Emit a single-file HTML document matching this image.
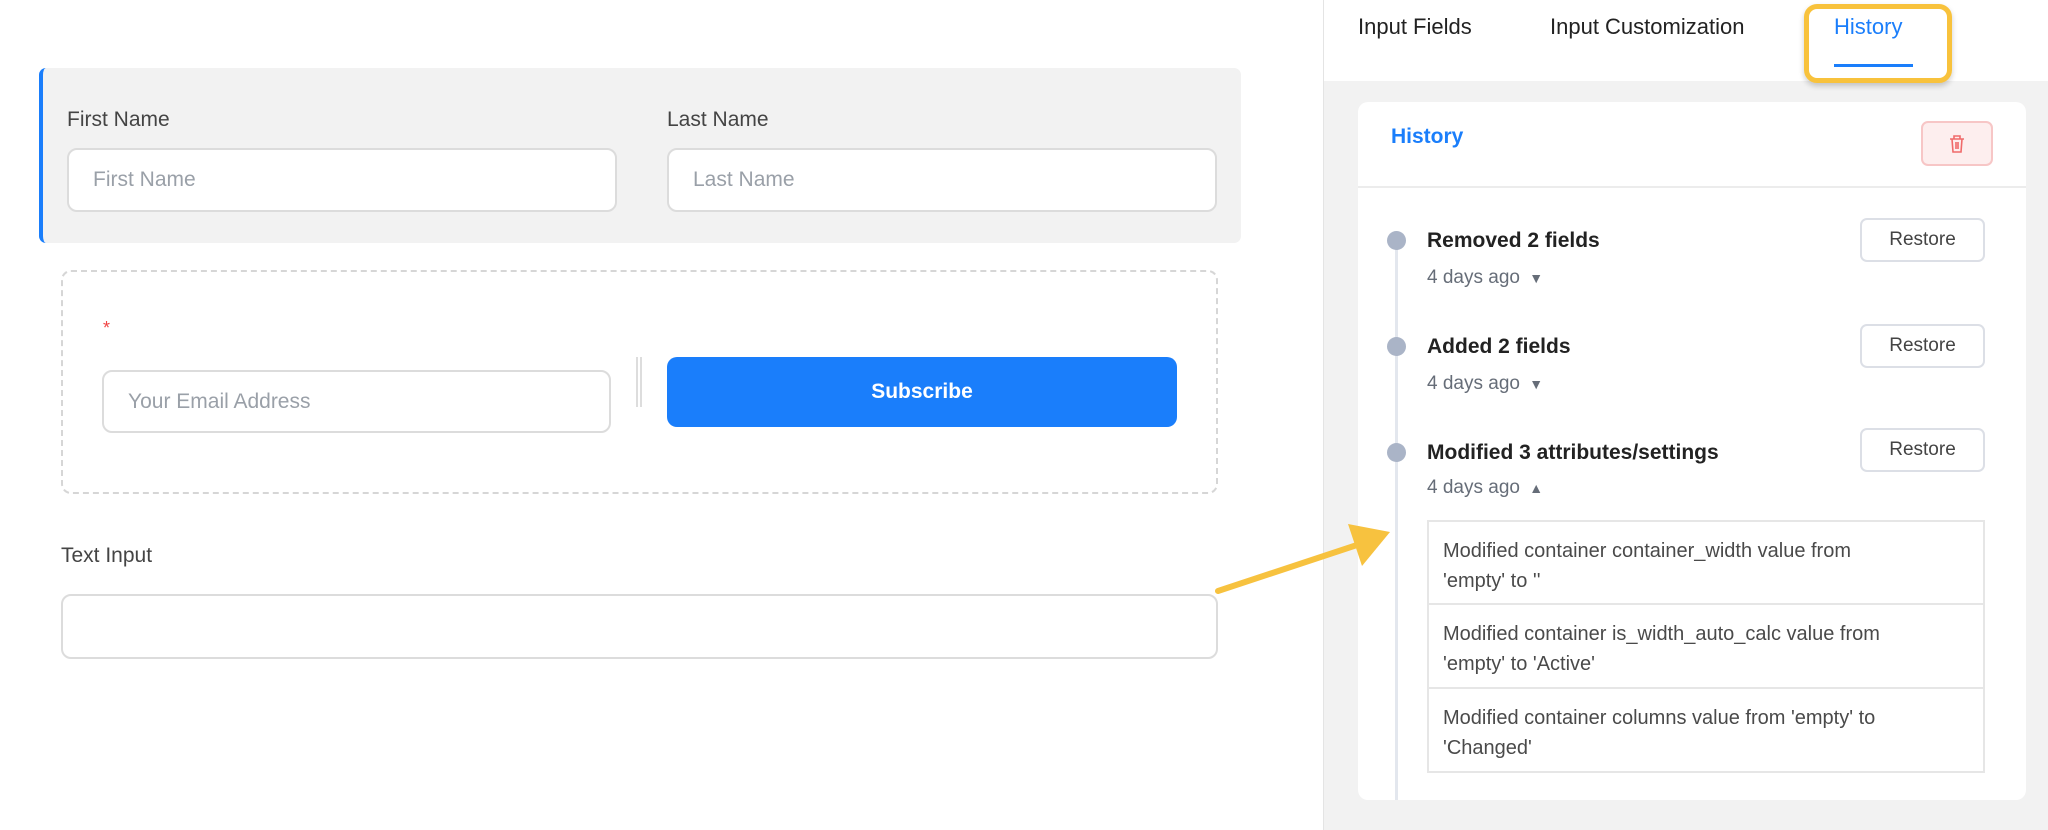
<!DOCTYPE html>
<html><head><meta charset="utf-8"><style>
*{box-sizing:border-box;margin:0;padding:0}
body{width:2048px;height:830px;overflow:hidden;background:#fff;font-family:"Liberation Sans",sans-serif;position:relative}
.a{position:absolute}
.inp{position:absolute;background:#fff;border:2px solid #dcdcdc;border-radius:10px;color:#9aa0a8;font-size:21px;padding-left:24px;display:flex;align-items:center}
.lbl{position:absolute;font-size:21px;color:#444}
.t{position:absolute;font-size:21px;font-weight:bold;color:#222}
.ago{position:absolute;font-size:19px;color:#666d78}
.rb{position:absolute;left:1860px;width:125px;height:44px;border:2px solid #dcdfe6;border-radius:7px;font-size:19px;color:#444;display:flex;align-items:center;justify-content:center;background:#fff}
.dot{position:absolute;left:1387px;width:19px;height:19px;border-radius:50%;background:#aab4c7}
.row{position:absolute;left:1427px;width:558px;border:2px solid #e6e6e6;font-size:20px;color:#4a4a4a;line-height:30px;padding:14px 89px 12px 14px}
</style></head><body>
<!-- left -->
<div class="a" style="left:39px;top:68px;width:1202px;height:175px;background:#f2f2f2;border-radius:7px;border-left:4px solid #1a7efb"></div>
<div class="lbl" style="left:67px;top:108px">First Name</div>
<div class="lbl" style="left:667px;top:108px">Last Name</div>
<div class="inp" style="left:67px;top:148px;width:550px;height:64px">First Name</div>
<div class="inp" style="left:667px;top:148px;width:550px;height:64px">Last Name</div>
<div class="a" style="left:61px;top:270px;width:1157px;height:224px;border:2px dashed #d6d6d6;border-radius:10px"></div>
<div class="a" style="left:103px;top:318px;color:#f04444;font-size:18px">*</div>
<div class="inp" style="left:102px;top:370px;width:509px;height:63px">Your Email Address</div>
<div class="a" style="left:636px;top:357px;width:6px;height:50px;border-left:2px solid #ddd;border-right:2px solid #ddd"></div>
<div class="a" style="left:667px;top:357px;width:510px;height:70px;background:#1a7efb;border-radius:10px;color:#fff;font-size:21px;font-weight:bold;display:flex;align-items:center;justify-content:center">Subscribe</div>
<div class="lbl" style="left:61px;top:544px">Text Input</div>
<div class="inp" style="left:61px;top:594px;width:1157px;height:65px"></div>
<!-- sidebar -->
<div class="a" style="left:1323px;top:0;width:725px;height:830px;background:#f2f2f2;border-left:1px solid #e4e4e4"></div>
<div class="a" style="left:1323px;top:0;width:725px;height:81px;background:#fff;border-left:1px solid #e4e4e4"></div>
<div class="a" style="left:1358px;top:14px;font-size:22px;color:#222">Input Fields</div>
<div class="a" style="left:1550px;top:14px;font-size:22px;color:#222">Input Customization</div>
<div class="a" style="left:1804px;top:4px;width:148px;height:79px;border:5px solid #f8c23c;border-radius:13px;box-shadow:0 3px 6px rgba(0,0,0,.2)"></div>
<div class="a" style="left:1834px;top:14px;font-size:22px;color:#1a7efb">History</div>
<div class="a" style="left:1834px;top:64px;width:79px;height:3px;background:#1a7efb"></div>
<div class="a" style="left:1358px;top:102px;width:668px;height:698px;background:#fff;border-radius:10px"></div>
<div class="a" style="left:1358px;top:186px;width:668px;height:2px;background:#ececec"></div>
<div class="a" style="left:1391px;top:125px;font-size:21px;font-weight:bold;color:#1a7efb">History</div>
<div class="a" style="left:1921px;top:121px;width:72px;height:45px;background:#fdeeee;border:2px solid #f7c6c6;border-radius:7px;display:flex;align-items:center;justify-content:center">
<svg width="18" height="20" viewBox="0 0 18 20" fill="none" stroke="#f06a6a" stroke-width="1.6"><path d="M2 5h14M6 5V2h6v3M4 5l1 13h8l1-13M8 8v7M10 8v7"/></svg></div>
<div class="a" style="left:1395px;top:240px;width:3px;height:560px;background:#e3e7ee"></div>
<div class="dot" style="top:231px"></div>
<div class="dot" style="top:337px"></div>
<div class="dot" style="top:443px"></div>
<div class="t" style="left:1427px;top:229px">Removed 2 fields</div>
<div class="ago" style="left:1427px;top:267px">4 days ago <span style="font-size:14px;margin-left:4px">▼</span></div>
<div class="rb" style="top:218px">Restore</div>
<div class="t" style="left:1427px;top:335px">Added 2 fields</div>
<div class="ago" style="left:1427px;top:373px">4 days ago <span style="font-size:14px;margin-left:4px">▼</span></div>
<div class="rb" style="top:324px">Restore</div>
<div class="t" style="left:1427px;top:441px">Modified 3 attributes/settings</div>
<div class="ago" style="left:1427px;top:477px">4 days ago <span style="font-size:14px;margin-left:4px">▲</span></div>
<div class="rb" style="top:428px">Restore</div>
<div class="row" style="top:520px;height:85px">Modified container container_width value from 'empty' to ''</div>
<div class="row" style="top:603px;height:86px">Modified container is_width_auto_calc value from 'empty' to 'Active'</div>
<div class="row" style="top:687px;height:86px">Modified container columns value from 'empty' to 'Changed'</div>
<!-- arrow -->
<svg class="a" style="left:0;top:0" width="2048" height="830"><g fill="#f7c23f"><line x1="1218" y1="591" x2="1360" y2="544" stroke="#f7c23f" stroke-width="6" stroke-linecap="round"/><polygon points="1390,532 1348,524 1362,566"/></g></svg>
</body></html>
